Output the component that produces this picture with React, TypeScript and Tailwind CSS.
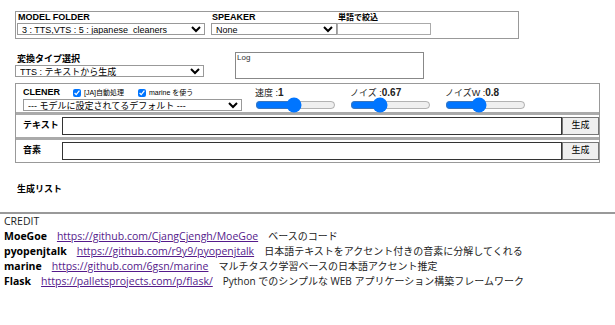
import React, { useState } from "react";

const font = { fontFamily: '"Liberation Sans", "Noto Sans CJK JP", sans-serif' };
const creditFont = { fontFamily: '"Open Sans", "Noto Sans CJK JP", sans-serif' };

interface Credit {
  name: string;
  url: string;
  desc: string;
}

const credits: Credit[] = [
  { name: "MoeGoe", url: "https://github.com/CjangCjengh/MoeGoe", desc: "ベースのコード" },
  { name: "pyopenjtalk", url: "https://github.com/r9y9/pyopenjtalk", desc: "日本語テキストをアクセント付きの音素に分解してくれる" },
  { name: "marine", url: "https://github.com/6gsn/marine", desc: "マルチタスク学習ベースの日本語アクセント推定" },
  { name: "Flask", url: "https://palletsprojects.com/p/flask/", desc: "Python でのシンプルな WEB アプリケーション構築フレームワーク" },
];

const Slider = ({ label, value, min, max }: { label: string; value: number; min: number; max: number }) => {
  const [v, setV] = useState(value);
  return (
    <div className="flex flex-col w-[95px]">
      <div className="text-[9px] leading-[12px] text-[#222]">
        {label} :<b className="text-[10px]">{v}</b>
      </div>
      <input
        type="range"
        min={min}
        max={max}
        step={0.01}
        value={v}
        onChange={(e) => setV(Number(e.target.value))}
        className="w-[81px] h-[12px] m-0"
      />
    </div>
  );
};

const App: React.FC = () => {
  return (
    <div style={font} className="bg-white text-black min-h-[325px]">
      <div className="pl-[15px] pt-[11px]">
        {/* モデル選択 */}
        <div className="w-[504px] border border-[#999] flex pl-[1px] pb-[3px]">
          <div className="flex flex-col w-[194px]">
            <span className="text-[9px] font-bold leading-[11px] pl-[1px]">MODEL FOLDER</span>
            <select className="w-[188px] h-[12px] text-[9px] leading-[10px] border border-[#999] px-0 py-0 bg-white">
              <option>3 : TTS,VTS : 5 : japanese_cleaners</option>
            </select>
          </div>
          <div className="flex flex-col w-[126px]">
            <span className="text-[9px] font-bold leading-[11px] pl-[1px]">SPEAKER</span>
            <select className="w-[126px] h-[12px] text-[9px] leading-[10px] border border-[#999] p-0 bg-white">
              <option>None</option>
            </select>
          </div>
          <div className="flex flex-col w-[95px]">
            <span className="text-[8px] font-bold leading-[11px] pl-[1px]">単語で絞込</span>
            <input className="w-[94px] h-[12px] border border-[#aaa]" />
          </div>
        </div>

        {/* 変換タイプ */}
        <div className="flex mt-[13px] h-[31px]">
          <div className="flex flex-col w-[220px] pt-[2px]">
            <span className="text-[9px] font-bold leading-[11px] pl-[2px]">変換タイプ選択</span>
            <select className="w-[189px] h-[12px] text-[9px] leading-[10px] border border-[#999] p-0 bg-white">
              <option>TTS : テキストから生成</option>
            </select>
          </div>
          <textarea
            placeholder="Log"
            className="w-[189px] h-[27px] border border-[#888] text-[8px] leading-[10px] px-[1px] placeholder:text-[#333] resize-none"
          />
        </div>

        {/* 生成設定 */}
        <div className="w-[585px] border border-[#999]">
          <div className="flex items-start h-[28px] pl-[7px] pt-[3px]">
            <div className="flex flex-col w-[232px]">
              <div className="flex items-center h-[12px]">
                <span className="text-[9px] font-bold w-[50px]">CLENER</span>
                <label className="flex items-center gap-[3px] text-[7px] w-[65px]">
                  <input type="checkbox" defaultChecked className="w-[8px] h-[8px] m-0" />
                  [JA]自動処理
                </label>
                <label className="flex items-center gap-[3px] text-[7px]">
                  <input type="checkbox" defaultChecked className="w-[8px] h-[8px] m-0" />
                  marine を使う
                </label>
              </div>
              <select className="w-[219px] h-[12px] text-[9px] leading-[10px] border border-[#999] p-0 bg-white">
                <option>--- モデルに設定されてるデフォルト ---</option>
              </select>
            </div>
            <div className="flex">
              <Slider label="速度" value={1} min={0.1} max={2} />
              <Slider label="ノイズ" value={0.67} min={0} max={2} />
              <Slider label="ノイズW" value={0.8} min={0} max={2} />
            </div>
          </div>
          <div className="border-t-[3px] border-[#aaa] flex items-center h-[25px] pl-[7px] pb-[1px]">
            <span className="text-[9px] font-bold w-[39px]">テキスト</span>
            <input className="flex-1 h-[18px] border border-[#333]" />
            <button className="w-[37px] h-[18px] bg-[#efefef] border border-[#767676] text-[9px]">生成</button>
          </div>
          <div className="border-t-[3px] border-[#aaa] flex items-center h-[25px] pl-[7px] pb-[1px]">
            <span className="text-[9px] font-bold w-[39px]">音素</span>
            <input className="flex-1 h-[18px] border border-[#333]" />
            <button className="w-[37px] h-[18px] bg-[#efefef] border border-[#767676] text-[9px]">生成</button>
          </div>
        </div>

        <div className="text-[9px] font-bold mt-[20px] pl-[2px] h-[29px]">生成リスト</div>
      </div>

      <hr className="border-0 border-t-[2px] border-[#999]" />

      {/* CREDIT */}
      <div style={creditFont} className="px-[4px] text-[10.5px] leading-[15px] text-[#222]">
        <div>CREDIT</div>
        {credits.map((c) => (
          <div key={c.name} className="flex items-baseline gap-[10px] whitespace-nowrap">
            <b className="text-black">{c.name}</b>
            <a href={c.url} className="text-[#551a8b] underline">
              {c.url}
            </a>
            <span className="text-[10px]">{c.desc}</span>
          </div>
        ))}
      </div>
    </div>
  );
};

export default App;
